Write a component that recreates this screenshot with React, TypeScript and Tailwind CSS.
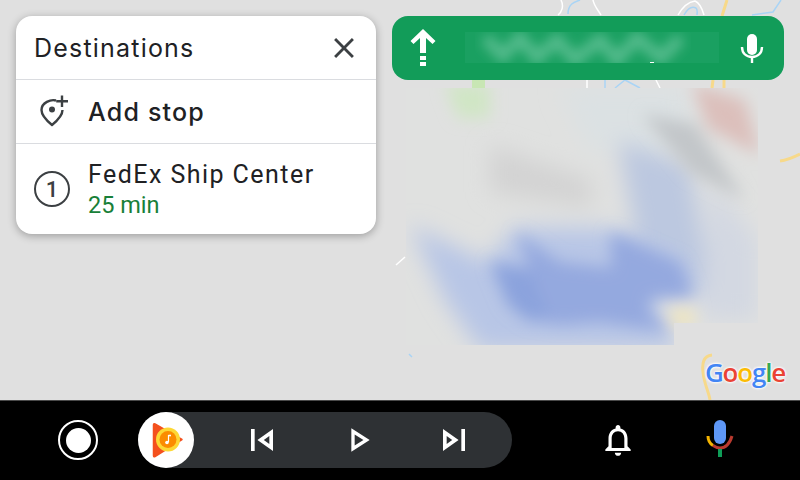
const roboto = "font-['Roboto','Noto_Sans',sans-serif]";
const inter = "font-['Inter','Noto_Sans',sans-serif]";

const MapBackdrop = () => (
  <svg className="absolute inset-0" width="800" height="400" viewBox="0 0 800 400">
    <defs>
      <filter id="soft" x="-15%" y="-15%" width="130%" height="130%">
        <feGaussianBlur stdDeviation="11" />
      </filter>
      <filter id="softer" x="-25%" y="-25%" width="150%" height="150%">
        <feGaussianBlur stdDeviation="8" />
      </filter>
      <clipPath id="patch">
        <path d="M406 88H758V323H674V345H406Z" />
      </clipPath>
    </defs>
    <g fill="none" strokeWidth="1.5">
      <path d="M561 0C564 6 562 12 558 15M593 0C594 6 598 10 601 15M678 15C682 8 688 2 695 1C700 3 702 8 704 15M587 80V88M660 88L656 80" stroke="#fff" />
      <path d="M580 0C574 2 568 4 568 14M684 15C688 8 692 6 696 8C698 10 697 13 697 15M752 15L773 12L781 0M605 80V88M615 88L625 80L640 88" stroke="#a9d4f5" />
      <path d="M396 265L405 257" stroke="#fff" />
      <path d="M409 354L412 357" stroke="#a9d4f5" />
      <path d="M727 0L722 16M713 80L712 88M724 80V88M780 161C788 160 794 157 800 154M712 355C703 356 702 364 703 372C704 384 709 392 710 400" stroke="#f7d98a" strokeWidth="3" />
    </g>
    <rect x="472" y="80" width="13" height="8" fill="#c8e6b4" />
    <g clipPath="url(#patch)">
      <rect x="400" y="80" width="370" height="270" fill="#e0e1e0" />
      <g filter="url(#soft)">
        <path d="M560 88H690V150H590Z" fill="#dbe1e3" />
        <path d="M490 145L592 180L592 208L490 192Z" fill="#d3d3d3" />
        <path d="M618 140L690 165L712 295L640 295L635 230Z" fill="#bcc8e0" />
        <path d="M710 180L758 240V320H700Z" fill="#d3d8e2" />
        <path d="M410 225L487 262L515 228L610 228L683 258L700 295L650 293L680 350L480 350L445 300Z" fill="#b8c6e6" />
      </g>
      <g filter="url(#softer)">
        <path d="M445 84H490V118H458Z" fill="#d0e6c5" />
        <path d="M692 84L745 100L760 155L708 128Z" fill="#dcbfbb" />
        <path d="M642 114L695 124L745 200L690 172Z" fill="#c2c6c9" />
        <path d="M516 232L560 262L612 268L610 232L680 262L694 296L650 298L648 312L672 332L600 322L560 325L530 320L510 300L490 262L530 268Z" fill="#94a9df" />
        <path d="M490 262L530 272L548 316L530 322L508 305Z" fill="#8ba3dd" />
        <path d="M668 310L696 310L692 326L674 326Z" fill="#f1e6bc" />
      </g>
    </g>
  </svg>
);

const PinPlus = () => (
  <svg width="32" height="34" viewBox="0 0 32 34" fill="none" stroke="#3c4043" strokeWidth="2.4">
    <path d="M16 6.500C11 5 1.500 8.500 1.500 16C1.500 21.500 6.500 26.500 12 31C17.500 26.500 22.500 21.500 22.500 16" strokeLinejoin="round" />
    <circle cx="12" cy="15.500" r="3" fill="#3c4043" stroke="none" />
    <path d="M22 1.500V13M16.200 7.200H28" />
  </svg>
);

const DestinationCard = () => (
  <div className="w-[360px] rounded-2xl bg-white text-[#202124] shadow-[0_2px_8px_rgba(0,0,0,0.3)]">
    <div className="flex h-16 items-center justify-between border-b border-[#dadce0] pl-[18px] pr-[15px]">
      <span className={`${inter} pt-0.5 text-[25px] tracking-[1.2px]`}>Destinations</span>
      <svg width="34" height="34" viewBox="0 0 24 24" fill="#3c4043">
        <path d="M19 6.41L17.59 5 12 10.59 6.41 5 5 6.41 10.59 12 5 17.59 6.41 19 12 13.41 17.59 19 19 17.59 13.41 12z" />
      </svg>
    </div>
    <div className="flex h-16 items-center border-b border-[#dadce0] pl-[24px]">
      <div className="-mt-0.5 w-12">
        <PinPlus />
      </div>
      <span className={`${inter} pt-0.5 text-[25px] font-medium tracking-[1.2px]`}>Add stop</span>
    </div>
    <div className={`${roboto} flex h-[90px] items-center pl-[18px]`}>
      <div className="mr-[18px] flex h-9 w-9 items-center justify-center rounded-full border-[2.5px] border-[#3c4043] text-[22px] font-medium text-[#3c4043]">
        1
      </div>
      <div className="flex flex-col">
        <span className="text-[25px] leading-[32px] tracking-[1.45px]">FedEx Ship Center</span>
        <span className="text-[23.5px] leading-[28px] text-[#188038]">25 min</span>
      </div>
    </div>
  </div>
);

const NavBanner = () => (
  <div className="relative flex h-16 w-[392px] items-center rounded-2xl bg-[#129c59]">
    <svg className="ml-[17px]" width="28" height="40" viewBox="0 0 28 40" fill="#fff">
      <path d="M14 1L26.500 13L23.500 16L17 10V25H11V10L4.500 16L1.500 13Z" />
      <rect x="11" y="28" width="6" height="4" />
      <rect x="11" y="34" width="6" height="4" />
    </svg>
    <svg className="ml-[28px] -mt-0.5" width="254" height="31" viewBox="0 0 254 31">
      <defs>
        <filter id="txt" x="-5%" y="-30%" width="110%" height="160%">
          <feGaussianBlur stdDeviation="6" />
        </filter>
        <clipPath id="txtClip">
          <rect width="254" height="31" />
        </clipPath>
      </defs>
      <g clipPath="url(#txtClip)">
        <rect width="254" height="31" fill="#1aa061" />
        <path d="M20 6L38 24L55 6L72 26L92 8L110 28L135 8L152 28L172 6L196 26L216 6" fill="none" stroke="#55bb8d" strokeWidth="12" filter="url(#txt)" />
      </g>
    </svg>
    <svg className="ml-[21px]" width="24" height="32" viewBox="0 0 24 32" fill="none" stroke="#fff">
      <rect x="7" y="2" width="10" height="21" rx="5" fill="#fff" stroke="none" />
      <path d="M2 15C2 21 6 25 12 25C18 25 22 21 22 15" strokeWidth="2.400" />
      <path d="M12 25V31" strokeWidth="2.400" />
    </svg>
    <div className="absolute left-[258px] top-[46px] h-px w-1 bg-white" />
  </div>
);

const PlayMusicLogo = () => (
  <div className="flex h-14 w-14 flex-none items-center justify-center rounded-full bg-white">
    <svg width="36" height="40" viewBox="0 0 36 40">
      <path d="M7 4L34 19.500L7 36.500C6 37 5.500 36.500 5.500 35.500V5C5.500 4 6 3.500 7 4Z" fill="#f4511e" stroke="#f4511e" strokeWidth="1.500" strokeLinejoin="round" />
      <circle cx="20" cy="19.500" r="12" fill="#fdd835" />
      <circle cx="20" cy="19.500" r="8.500" fill="#fb8c00" />
      <path d="M20.500 15V22" stroke="#fff" strokeWidth="1.200" />
      <path d="M20.500 15.500H23" stroke="#fff" strokeWidth="1.600" />
      <circle cx="19" cy="22.500" r="1.800" fill="#fff" />
    </svg>
  </div>
);

const MediaControl = ({ d, size }: { d: string; size: number }) => (
  <div className="flex w-24 items-center justify-center">
    <svg width={size} height={size} viewBox="0 0 24 24" fill="#fff">
      <path d={d} />
    </svg>
  </div>
);

const BottomBar = () => (
  <div className="flex h-20 flex-none items-center border-t border-[#4a4a4a] bg-black pb-px pl-[58px]">
    <div className="flex h-10 w-10 items-center justify-center rounded-full border-[2.5px] border-white">
      <div className="h-[25px] w-[25px] rounded-full bg-white" />
    </div>
    <div className="ml-10 flex h-14 w-[374px] items-center rounded-full bg-[#2e3134]">
      <PlayMusicLogo />
      <div className="ml-5 flex">
        <MediaControl size={44} d="M6 6h2v12H6zm3.500 6l8.500 6V6l-8.500 6zm6.500 2.140L12.970 12 16 9.860v4.280z" />
        <MediaControl size={40} d="M10 8.640L15.270 12 10 15.360V8.640M8 5v14l11-7L8 5z" />
        <MediaControl size={44} d="M6 18l8.500-6L6 6v12zM8 9.860L11.030 12 8 14.140V9.860zM16 6h2v12h-2z" />
      </div>
    </div>
    <svg className="ml-[87px]" width="38" height="38" viewBox="0 0 24 24" fill="#fff">
      <path d="M12 22c1.100 0 2-.9 2-2h-4c0 1.100.9 2 2 2zm6-6v-5c0-3.070-1.630-5.640-4.500-6.320V4c0-.83-.67-1.500-1.500-1.500s-1.500.67-1.500 1.500v.68C7.640 5.360 6 7.920 6 11v5l-2 2v1h16v-1l-2-2zm-2 1H8v-6c0-2.480 1.510-4.500 4-4.500s4 2.020 4 4.500v6z" />
    </svg>
    <svg className="ml-[63px]" width="40" height="44" viewBox="0 0 40 44" fill="none">
      <rect x="14" y="2" width="12" height="24" rx="6" fill="#5e97f6" />
      <path d="M8 18C8 21 9 25 13 27.500" stroke="#f4b400" strokeWidth="3" />
      <path d="M13 27.500C16 29.500 18 30 20 30C24 30 29 28 32 18" stroke="#db4437" strokeOpacity="0.85" strokeWidth="3" />
      <path d="M20 31V39" stroke="#0f9d58" strokeWidth="4" />
    </svg>
  </div>
);

const GoogleMark = () => (
  <div className="absolute bottom-[15px] right-[15px] font-['Open_Sans',sans-serif] text-[26px] font-semibold leading-none tracking-[-1.2px] [text-shadow:0_0_2px_#fff,0_0_3px_#fff,0_0_3px_#fff]">
    <span className="text-[#4285f4]">G</span>
    <span className="text-[#ea4335]">o</span>
    <span className="text-[#fbbc05]">o</span>
    <span className="text-[#4285f4]">g</span>
    <span className="text-[#34a853]">l</span>
    <span className="text-[#ea4335]">e</span>
  </div>
);

export default function App() {
  return (
    <div className="flex h-[480px] w-[800px] flex-col overflow-hidden bg-[#e0e0e0]">
      <div className="relative flex-1">
        <MapBackdrop />
        <div className="relative flex items-start gap-4 p-4">
          <DestinationCard />
          <NavBanner />
        </div>
        <GoogleMark />
      </div>
      <BottomBar />
    </div>
  );
}
